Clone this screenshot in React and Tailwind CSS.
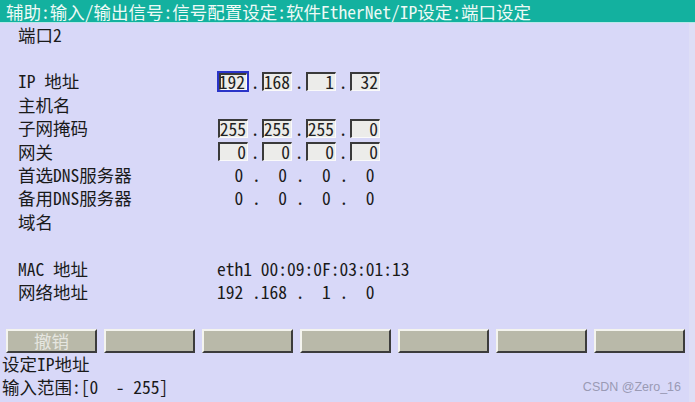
import React from "react";

const FONT = {
  fontFamily:
    '"Noto Sans Mono CJK SC", "Noto Sans CJK SC", "Liberation Mono", monospace',
};

function Box({ v, focus }) {
  return (
    <div
      className={
        "h-[21px] w-[32px] " +
        (focus ? "border-2 border-[#2a34c8] p-0" : "p-[1px]")
      }
    >
      <div className="flex h-full w-full items-center justify-end border-l-2 border-t-2 border-r border-b border-l-[#3a3a3a] border-t-[#3a3a3a] border-r-[#fafafa] border-b-[#fafafa] bg-[#ececea] pr-[1px] leading-none text-[#222]">
        {v}
      </div>
    </div>
  );
}

function Boxes({ vals, focusFirst }) {
  return (
    <div className="flex items-center">
      {vals.map((v, i) => (
        <div key={i} className="flex items-center w-[44px]">
          <Box v={v} focus={focusFirst && i === 0} />
          {i < 3 && (
            <div className="flex-1 text-center leading-none">.</div>
          )}
        </div>
      ))}
    </div>
  );
}

function Row({ label, children }) {
  return (
    <div className="flex h-[23.4px] items-center whitespace-pre leading-[20px]">
      <div className="w-[199px]">{label}</div>
      <div>{children}</div>
    </div>
  );
}

export default function App() {
  return (
    <div
      className="relative w-[695px] h-[402px] overflow-hidden bg-[#d8d8f8] text-[#1a1a1a] text-[17.5px]"
      style={FONT}
    >
      <div className="flex h-[22px] items-end bg-[#13b19f] pl-[6px] text-[#eefaf6] whitespace-nowrap">
        <span className="leading-[21px]">辅助:输入/输出信号:信号配置设定:软件EtherNet/IP设定:端口设定</span>
      </div>
      <div className="h-[1px] bg-[#b8e8e8]" />
      <div className="pl-[18px]">
        <Row label="端口2" />
        <Row label="" />
        <Row label="IP 地址">
          <Boxes vals={["192", "168", "1", "32"]} focusFirst />
        </Row>
        <Row label="主机名" />
        <Row label="子网掩码">
          <Boxes vals={["255", "255", "255", "0"]} />
        </Row>
        <Row label="网关">
          <Boxes vals={["0", "0", "0", "0"]} />
        </Row>
        <Row label="首选DNS服务器">{"  0 .  0 .  0 .  0"}</Row>
        <Row label="备用DNS服务器">{"  0 .  0 .  0 .  0"}</Row>
        <Row label="域名" />
        <Row label="" />
        <Row label="MAC 地址">eth1 00:09:0F:03:01:13</Row>
        <Row label="网络地址">{"192 .168 .  1 .  0"}</Row>
      </div>
      <div className="mt-[25px] flex gap-[7px] pl-[6px]">
        {["撤销", "", "", "", "", "", ""].map((t, i) => (
          <div
            key={i}
            className="h-[24px] w-[91px] border-l-2 border-t-2 border-r-2 border-b-2 border-l-[#f4f4ee] border-t-[#f4f4ee] border-r-[#3c3c3c] border-b-[#3c3c3c] bg-[#b9b9a9] text-center leading-[20px] text-[#e6e6e0]"
          >
            {t}
          </div>
        ))}
      </div>
      <div className="flex h-[23px] items-center pl-[2px]">
        <span className="leading-[20px]">设定IP地址</span>
      </div>
      <div className="flex h-[23px] items-center justify-between pl-[2px] pr-[14px]">
        <span className="whitespace-pre leading-[20px]">输入范围:[0  - 255]</span>
        <span
          className="text-[12.5px] leading-[16px] text-[#9a9ab4]"
          style={{ fontFamily: '"Liberation Sans", Arial, sans-serif' }}
        >
          CSDN @Zero_16
        </span>
      </div>
      <div className="absolute right-0 top-[23px] bottom-0 w-[6px] bg-[#dedef6]" />
    </div>
  );
}
